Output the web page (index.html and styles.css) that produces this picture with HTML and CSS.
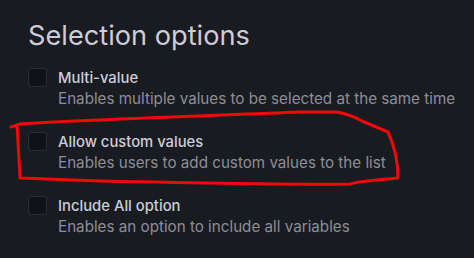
FILE: index.html
```html
<!DOCTYPE html>
<html>
<head>
<meta charset="utf-8">
<link rel="stylesheet" href="styles.css">
</head>
<body>
<div class="panel">
  <h3 class="title">Selection options</h3>
  <div class="options">
    <div class="option">
      <span class="box"></span>
      <div class="text">
        <div class="label">Multi-value</div>
        <div class="desc">Enables multiple values to be selected at the same time</div>
      </div>
    </div>
    <div class="option">
      <span class="box"></span>
      <div class="text">
        <div class="label">Allow custom values</div>
        <div class="desc">Enables users to add custom values to the list</div>
      </div>
    </div>
    <div class="option">
      <span class="box"></span>
      <div class="text">
        <div class="label">Include All option</div>
        <div class="desc">Enables an option to include all variables</div>
      </div>
    </div>
  </div>
  <svg class="annotation" width="474" height="258" viewBox="0 0 474 258">
    <path d="M 11 127 L 20 124 C 80 120, 200 116, 300 112 L 337 112 C 348 114, 355 117, 362 121 L 388 132 C 394 145, 398 160, 398 178 C 380 180, 360 181, 350 184 C 300 185, 200 183, 100 181 L 20 178 C 19 160, 18 140, 17 125" />
  </svg>
</div>
</body>
</html>
```
FILE: styles.css
```css
html, body {
  margin: 0;
  padding: 0;
  background: #181b1f;
}
.panel {
  position: relative;
  width: 474px;
  height: 258px;
  box-sizing: border-box;
  padding: 17px 0 0 28px;
  font-family: Inter, "Noto Sans", sans-serif;
  overflow: hidden;
}
.title {
  margin: 0;
  font-size: 27.2px;
  font-weight: 400;
  line-height: 38px;
  color: #ccccdc;
  letter-spacing: 0;
}
.options {
  display: flex;
  flex-direction: column;
  gap: 22px;
  margin-top: 13px;
}
.option {
  display: flex;
  gap: 11px;
  align-items: flex-start;
}
.box {
  width: 19px;
  height: 19px;
  box-sizing: border-box;
  border: 1px solid #2a2d33;
  border-radius: 3px;
  background: #111217;
  flex: none;
}
.text {
  display: flex;
  flex-direction: column;
}
.label {
  font-size: 14.8px;
  font-weight: 500;
  line-height: 20px;
  color: #ccccdc;
}
.desc {
  font-size: 15.2px;
  font-weight: 400;
  line-height: 22px;
  color: #8e8e99;
}
.annotation {
  position: absolute;
  left: 0;
  top: 0;
  pointer-events: none;
}
.annotation path {
  fill: none;
  stroke: #ee0a0a;
  stroke-width: 3;
  stroke-linecap: round;
  stroke-linejoin: round;
}
```
